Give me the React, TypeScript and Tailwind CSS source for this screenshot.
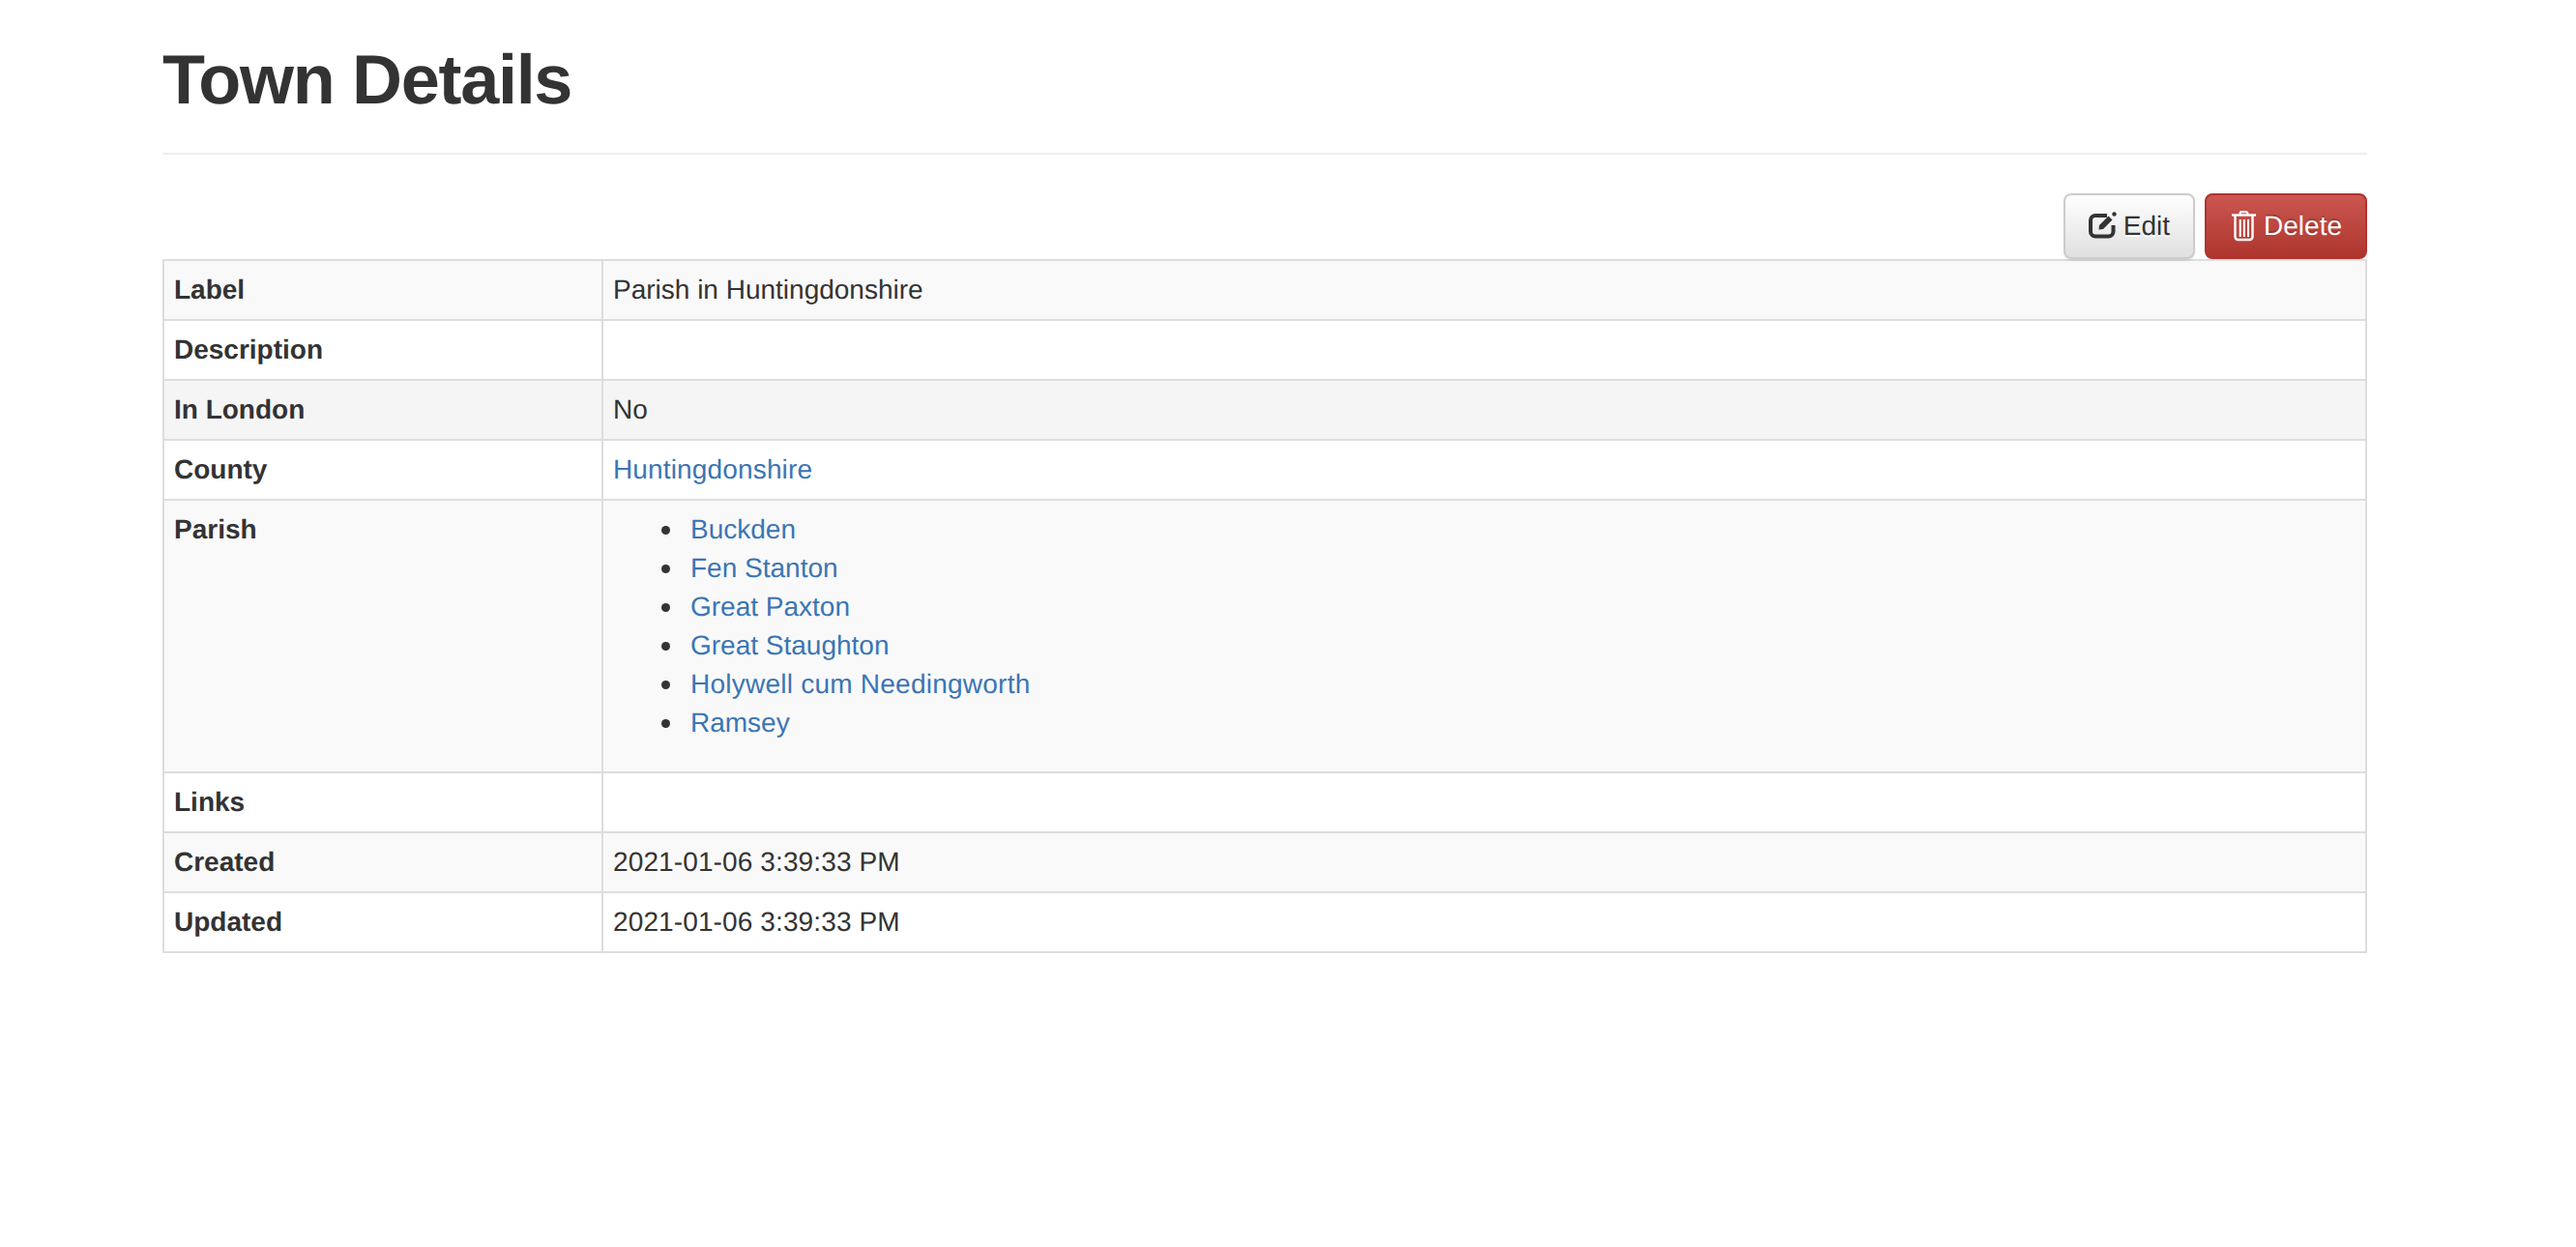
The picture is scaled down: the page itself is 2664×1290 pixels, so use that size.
const parishes = [
  { name: 'Buckden', cls: '' },
  { name: 'Fen Stanton', cls: '' },
  { name: 'Great Paxton', cls: '' },
  { name: 'Great Staughton', cls: '' },
  { name: 'Holywell cum Needingworth', cls: 'tracking-[0.24px]' },
  { name: 'Ramsey', cls: '' },
];

function EditIcon() {
  return (
    <svg width="29" height="30" viewBox="0 0 29 30" fill="none" className="mr-[7px] shrink-0">
      <path d="M25.500 14v6.500a5 5 0 0 1-5 5H7a5 5 0 0 1-5-5V9a5 5 0 0 1 5-5h12" stroke="#333" strokeWidth="4" />
      <path d="M10.500 18.500 11 14 20.500 4.500 24.500 8.500 15 18z" fill="#333" />
      <circle cx="26.500" cy="2.500" r="2.200" fill="#333" />
    </svg>
  );
}

function TrashIcon() {
  return (
    <svg width="28" height="32" viewBox="0 0 28 32" fill="none" className="mr-[7px] shrink-0">
      <path d="M2 4.500h25" stroke="#fff" strokeWidth="2.400" />
      <path d="M10.500 4V3a1.800 1.800 0 0 1 1.800-1.800h4.400A1.800 1.800 0 0 1 18.500 3v1" stroke="#fff" strokeWidth="2.200" />
      <path d="M5.500 5v22a3 3 0 0 0 3 3h12a3 3 0 0 0 3-3V5" stroke="#fff" strokeWidth="2.400" />
      <path d="M10.700 9v18M14.800 9v18M19 9v18" stroke="#fff" strokeWidth="2" />
    </svg>
  );
}

export default function App() {
  const th = 'border-2 border-[#ddd] p-[10px] text-left align-top font-bold leading-[40px] w-[454px]';
  const td = 'border-2 border-[#ddd] p-[10px] align-top leading-[40px]';

  return (
    <div className="min-h-[1290px] bg-white text-[28px] text-[#333] font-['Liberation_Sans',Arial,sans-serif] [text-rendering:geometricPrecision]">
      <div className="ml-[168px] w-[2280px]">
        {/* page header */}
        <div className="mb-[40px] border-b-2 border-[#eee] pb-[15px] pt-[44px]">
          <h1 className="mb-[20px] text-[72px] font-bold leading-[79px] tracking-[-1.3px] text-[#333]">Town Details</h1>
        </div>

        <div className="flex justify-end gap-[10px]">
          <a className="flex h-[68px] items-center rounded-[8px] border-2 border-[#ccc] bg-gradient-to-b from-white to-[#e0e0e0] px-[24px] text-[#333] shadow-[0_2px_2px_rgba(0,0,0,0.075)] [text-shadow:0_2px_0_#fff]">
            <EditIcon />
            Edit
          </a>
          <a className="flex h-[68px] items-center rounded-[8px] border-2 border-[#b0332d] bg-gradient-to-b from-[#cb5650] to-[#ae352e] px-[24px] text-white [text-shadow:0_-2px_0_rgba(0,0,0,0.2)]">
            <TrashIcon />
            Delete
          </a>
        </div>

        <table className="w-full border-collapse">
          <tbody>
            <tr className="bg-[#f9f9f9]">
              <th className={th}>Label</th>
              <td className={td}>Parish in Huntingdonshire</td>
            </tr>
            <tr>
              <th className={th}>Description</th>
              <td className={td}></td>
            </tr>
            <tr className="bg-[#f5f5f5]">
              <th className={th}>In London</th>
              <td className={td}>No</td>
            </tr>
            <tr>
              <th className={th}>County</th>
              <td className={td}><a className="tracking-[0.15px] text-[#3b75b4]">Huntingdonshire</a></td>
            </tr>
            <tr className="bg-[#f9f9f9]">
              <th className={th}>Parish</th>
              <td className={td}>
                <ul className="mb-[20px] pl-[50px]">
                  {parishes.map((p) => (
                    <li key={p.name} className="flex items-center gap-[21px]">
                      <span className="h-[9px] w-[9px] shrink-0 rounded-full bg-[#333]" />
                      <a className={`text-[#3b75b4] ${p.cls}`}>{p.name}</a>
                    </li>
                  ))}
                </ul>
              </td>
            </tr>
            <tr>
              <th className={th}>Links</th>
              <td className={td}></td>
            </tr>
            <tr className="bg-[#f9f9f9]">
              <th className={th}>Created</th>
              <td className={`${td} tracking-[0.12px]`}>2021-01-06 3:39:33 PM</td>
            </tr>
            <tr>
              <th className={th}>Updated</th>
              <td className={`${td} tracking-[0.12px]`}>2021-01-06 3:39:33 PM</td>
            </tr>
          </tbody>
        </table>
      </div>
    </div>
  );
}
